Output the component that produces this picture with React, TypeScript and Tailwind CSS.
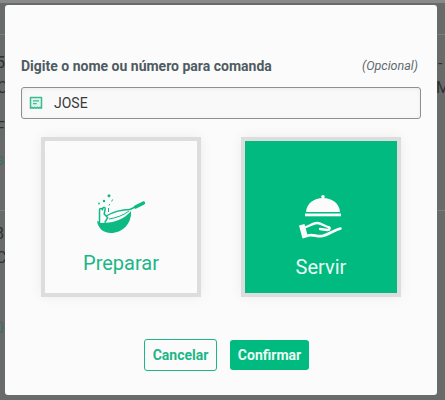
export default function App() {
  return (
    <div className="relative w-[445px] h-[400px] overflow-hidden bg-[#696b6b] pl-[5px] pt-[5px] font-['Roboto',sans-serif]">
      <div className="absolute left-0 top-0 w-full h-[3px] bg-[#8a8a8a]" />
      <div className="absolute left-0 top-[34px] w-full h-px bg-[#7c7e7e]" />
      <div className="absolute left-0 top-[210px] w-full h-px bg-[#7c7e7e]" />
      <span className="absolute left-[-4px] top-[51px] text-[16px] text-[#2f3131]">5</span>
      <span className="absolute left-[-3px] top-[76px] text-[16px] text-[#2f3131]">C</span>
      <span className="absolute left-[-4px] top-[116px] text-[16px] text-[#2f3131]">F</span>
      <span className="absolute left-[-4px] top-[148px] text-[16px] text-[#3f6f60]">s</span>
      <span className="absolute left-[-5px] top-[222px] text-[16px] text-[#2f3131]">8</span>
      <span className="absolute left-[-4px] top-[246px] text-[16px] text-[#2f3131]">C</span>
      <span className="absolute left-[-5px] top-[316px] text-[16px] text-[#3f6f60]">0</span>
      <span className="absolute left-[438px] top-[52px] text-[16px] text-[#2f3131]">-</span>
      <span className="absolute left-[436px] top-[76px] text-[16px] text-[#2f3131]">M</span>
      <div className="relative flex h-[390px] w-[432px] flex-col rounded-[3px] bg-[#fbfbfb] px-4">
        <div className="mt-[50px] flex h-[22px] items-center justify-between pr-[3px]">
          <span className="text-[14px] font-bold text-[#4f5b62]">Digite o nome ou número para comanda</span>
          <span className="text-[12.5px] italic text-[#5f6a70]">(Opcional)</span>
        </div>
        <div className="mt-[10px] flex h-[32px] w-[400px] items-center rounded-[3px] border border-[#8f8f8f] bg-[#f9f9f9] pl-[7px] shadow-[inset_0_1px_4px_rgba(0,0,0,0.06)]">
          <svg width="14" height="14" viewBox="0 0 14 14" fill="none" className="shrink-0">
            <path d="M1.500 1.500h11v10.800l-1.400-1-1.400 1-1.300-1-1.400 1-1.300-1-1.400 1-1.400-1-1.400 1z" fill="#dff4ec" stroke="#3dbd8f" strokeWidth="1.500" strokeLinejoin="round" />
            <path d="M4 4.800h6M4 7.600h3.600" stroke="#3dbd8f" strokeWidth="1.200" />
          </svg>
          <span className="ml-[11px] text-[14px] text-[#3a3a3a]">JOSE</span>
        </div>
        <div className="mt-[18px] flex gap-[40px] pl-[20px]">
          <div className="flex h-[160px] w-[160px] flex-col items-center border-4 border-[#dddddd] bg-[#fbfbfb] shadow-[0_0_12px_rgba(0,0,0,0.06)]">
            <svg width="50" height="40" viewBox="0 0 50 40" fill="none" className="mt-[53px]">
              <path d="M1 27C10 31 26 28 35 17C36 30 26 39 15 39C7 39 2 34 1 27z" fill="#0dba82" />
              <path d="M10 22C17 18 26 15.500 34 15.500" stroke="#0dba82" strokeWidth="1.300" />
              <path d="M13 25C20 24 28 21 33 17" stroke="#0dba82" strokeWidth="1" />
              <path d="M34 15.500l5-2.500" stroke="#0dba82" strokeWidth="1.500" />
              <path d="M39.500 13L47.500 9" stroke="#0dba82" strokeWidth="3.400" strokeLinecap="round" />
              <path d="M3.500 29V16c0-2 2.700-2 3-.200l.3-1.500c.5-1.500 2.600-1 2.400.6l-1 5 3.500 3.800-3 5" stroke="#0dba82" strokeWidth="1.500" fill="#fbfbfb" strokeLinejoin="round" />
              <circle cx="13" cy="1.800" r="1.500" fill="#0dba82" />
              <circle cx="8" cy="7" r="1.200" fill="#0dba82" />
              <circle cx="3" cy="9.500" r=".9" fill="#0dba82" />
              <path d="M16.500 5.500l-.8 2M13 11.500l.8-1.500M12.500 14v4" stroke="#0dba82" strokeWidth="1" />
            </svg>
            <span className="mt-[16px] text-[20px] leading-[26px] text-[#1cb687]">Preparar</span>
          </div>
          <div className="flex h-[160px] w-[160px] flex-col items-center border-4 border-[#dddddd] bg-[#00ba7f] shadow-[0_0_12px_rgba(0,0,0,0.06)]">
            <svg width="46" height="46" viewBox="0 0 46 46" fill="none" className="mt-[54px]">
              <circle cx="25" cy="1.800" r="1.800" fill="#fbfbfb" />
              <path d="M8 17C8.500 8.500 16 3 25 3s16.500 5.500 17 14z" fill="#fbfbfb" />
              <rect x="7" y="18.500" width="36" height="2.800" fill="#fbfbfb" />
              <path d="M1 30.500l5.500-1.500 3.500 13-5.500 1.500z" fill="#fbfbfb" />
              <path d="M8 32C13 30 16 28 19 28C23 28 26 31 30 32C32.500 32.500 32 35 29.500 35L22 34" stroke="#fbfbfb" strokeWidth="2.300" strokeLinecap="round" strokeLinejoin="round" />
              <path d="M10 40.500C15 39 19 42 24 41C30 40 35 35.500 42.500 33.500" stroke="#fbfbfb" strokeWidth="2.600" strokeLinecap="round" />
            </svg>
            <span className="mt-[13px] text-[20px] leading-[26px] text-[#eafaf4]">Servir</span>
          </div>
        </div>
        <div className="mt-[42px] flex items-center gap-[13px] pl-[123px]">
          <button className="h-[32px] w-[73px] rounded-[3px] border border-[#1cb687] bg-[#fbfbfb] text-[14px] font-bold text-[#1cb687]">Cancelar</button>
          <button className="h-[30px] w-[79px] rounded-[3px] bg-[#00ba7f] text-[14px] font-bold text-[#eafaf4]">Confirmar</button>
        </div>
      </div>
    </div>
  );
}
